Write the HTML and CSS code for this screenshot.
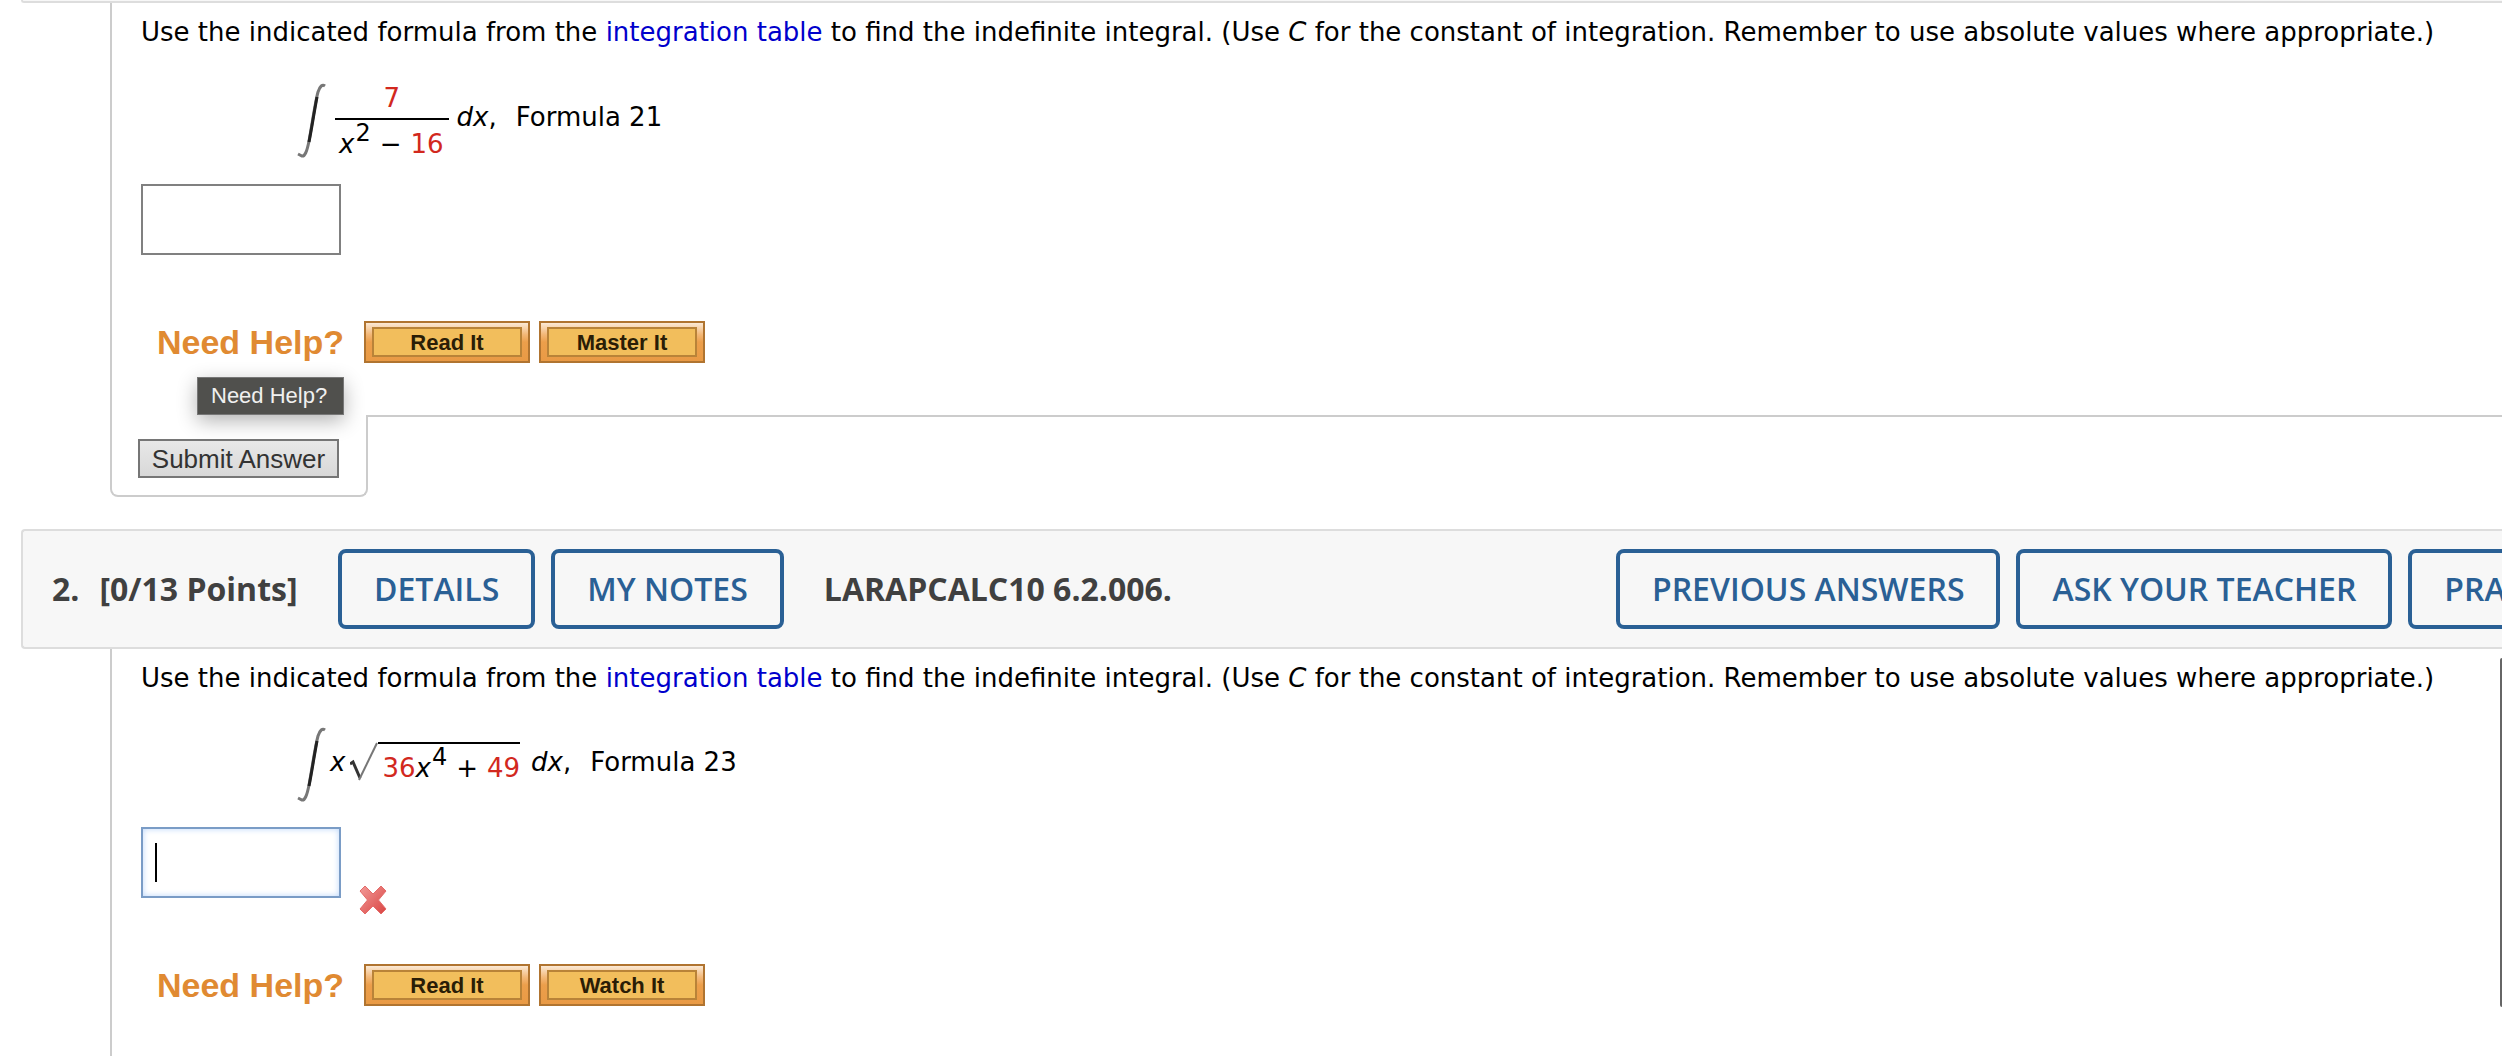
FILE: index.html
```html
<!DOCTYPE html>
<html lang="en">
<head>
<meta charset="utf-8">
<title>Integration homework</title>
<link rel="stylesheet" href="styles.css">
</head>
<body>
<main class="page">
  <div class="bar-end"></div>
  <section class="question">
    <div class="body first">
      <p class="prompt">Use the indicated formula from the <a href="#table">integration table</a> to find the indefinite integral. (Use <i>C</i> for the constant of integration. Remember to use absolute values where appropriate.)</p>
      <div class="math">
        <svg class="integral" viewBox="0 0 30 75" aria-label="integral"><path d="M28 3Q24 0 21 9C18 20 15 42 12 58Q9 74 5 73L1 71" fill="none" stroke="#777" stroke-width="3"/><path d="M20 14C17 30 15 44 12 59" fill="none" stroke="#222" stroke-width="3"/></svg>
        <span class="fraction"><span class="num red">7</span><span class="den"><i>x</i><sup>2</sup><span class="op">−</span><span class="red">16</span></span></span>
        <span class="term"><i>dx</i>,</span><span class="term formula">Formula 21</span>
      </div>
      <div class="answer-row"><input class="answer" type="text" aria-label="Answer to question 1"></div>
      <div class="help">
        <span class="help-title">Need Help?</span>
        <button class="help-btn" type="button"><span>Read It</span></button>
        <button class="help-btn" type="button"><span>Master It</span></button>
        <span class="tooltip" role="tooltip">Need Help?</span>
      </div>
    </div>
    <div class="foot">
      <div class="submit-tab"><button class="submit" type="button">Submit Answer</button></div>
      <div class="foot-line"></div>
    </div>
  </section>

  <header class="bar">
    <h2 class="points"><span>2.</span><span>[0/13 Points]</span></h2>
    <button class="action" type="button">DETAILS</button>
    <button class="action" type="button">MY NOTES</button>
    <strong class="code">LARAPCALC10 6.2.006.</strong>
    <div class="actions">
      <button class="action" type="button">PREVIOUS ANSWERS</button>
      <button class="action" type="button">ASK YOUR TEACHER</button>
      <button class="action" type="button">PRACTICE ANOTHER</button>
    </div>
  </header>
  <section class="question">
    <div class="body">
      <p class="prompt">Use the indicated formula from the <a href="#table">integration table</a> to find the indefinite integral. (Use <i>C</i> for the constant of integration. Remember to use absolute values where appropriate.)</p>
      <div class="math">
        <svg class="integral" viewBox="0 0 30 75" aria-label="integral"><path d="M28 3Q24 0 21 9C18 20 15 42 12 58Q9 74 5 73L1 71" fill="none" stroke="#777" stroke-width="3"/><path d="M20 14C17 30 15 44 12 59" fill="none" stroke="#222" stroke-width="3"/></svg>
        <span class="term factor"><i>x</i></span>
        <svg class="radical" viewBox="0 0 28 40" aria-label="square root"><path d="M0 22L3 20L10 36" fill="none" stroke="#333" stroke-width="3"/><path d="M9 38L27 1" fill="none" stroke="#777" stroke-width="2"/></svg>
        <span class="radicand"><span class="red">36</span><i>x</i><sup>4</sup><span class="op">+</span><span class="red">49</span></span>
        <span class="term after-root"><i>dx</i>,</span><span class="term formula">Formula 23</span>
      </div>
      <div class="answer-row">
        <input class="answer active" type="text" aria-label="Answer to question 2">
        <svg class="wrong" viewBox="0 0 28 30" aria-label="Incorrect"><defs><linearGradient id="g" x1="0" y1="0" x2="1" y2="1"><stop offset="0" stop-color="#f29a98"/><stop offset="1" stop-color="#d94442"/></linearGradient></defs><path d="M6 1L14 9L22 1L27 6L19.500 15L27 24L22 29L14 21L6 29L1 24L8.500 15L1 6Z" fill="url(#g)" stroke="#e46a68" stroke-width="1" stroke-linejoin="round"/></svg>
      </div>
      <div class="help">
        <span class="help-title">Need Help?</span>
        <button class="help-btn" type="button"><span>Read It</span></button>
        <button class="help-btn" type="button"><span>Watch It</span></button>
      </div>
    </div>
  </section>
  <div class="scroll-thumb"></div>
</main>
</body>
</html>
```
FILE: styles.css
```css
* { box-sizing: border-box; }
html, body { height: 100%; }
body {
  margin: 0;
  overflow: hidden;
  background: #fff;
  color: #000;
  font: 26px/30px "DejaVu Sans", sans-serif;
}
button { font: inherit; margin: 0; flex: none; white-space: nowrap; }
.page {
  position: relative;
  display: flex;
  flex-direction: column;
  min-height: 100%;
}
.bar-end {
  height: 3px;
  margin-left: 21px;
  background: #f7f7f7;
  border: 2px solid #ddd;
  border-width: 0 0 2px 2px;
  border-bottom-left-radius: 4px;
}
.question:last-of-type { flex: 1; display: flex; }
.body {
  flex: 1;
  margin-left: 110px;
  padding: 14px 0 52px 29px;
  border-left: 2px solid #ccc;
}
.prompt { margin: 0 0 34px; white-space: nowrap; }
.first .prompt { margin-bottom: 36px; }
.prompt a { color: #00c; text-decoration: none; }
.red { color: #d2281e; }

.math {
  display: flex;
  align-items: flex-start;
  height: 76px;
  margin: 0 0 24px 156px;
  white-space: nowrap;
}
.first .math { margin-bottom: 25px; }
.integral { width: 30px; height: 75px; flex: none; }
.fraction { display: flex; flex-direction: column; margin: 0 8px; }
.num { text-align: center; padding-bottom: 5px; border-bottom: 2px solid #000; }
.den { padding: 9px 5px 0 4px; }
sup { font-size: 24px; line-height: 0; vertical-align: 12px; margin-left: 1px; }
.op { margin: 0 9px; }
.term { padding-top: 20px; }
.first .term { padding-top: 19px; }
.factor { margin-left: 3px; }
.formula { margin-left: 19px; }
.radical { width: 28px; height: 40px; margin: 15px 0 0 5px; flex: none; }
.radicand { margin-top: 15px; padding: 9px 0 0 4px; border-top: 2px solid #000; }
.after-root { margin-left: 11px; }

.answer-row { display: flex; align-items: flex-end; height: 71px; }
.answer {
  width: 200px;
  height: 71px;
  padding: 0 12px;
  border: 2px solid #808080;
  border-radius: 0;
  background: #fff;
  font: inherit;
  outline: none;
}
.active {
  border-color: #7a9cc6;
  background: linear-gradient(#000, #000) 12px 14px / 2px 39px no-repeat #fff;
  box-shadow: inset 0 0 6px #bcd6fa;
}
.wrong { width: 28px; height: 30px; margin: 0 0 -17px 18px; }

.help {
  position: relative;
  display: flex;
  align-items: center;
  gap: 9px;
  margin: 66px 0 0 16px;
  font-family: "Liberation Sans", Arial, sans-serif;
}
.help-title { width: 198px; font-size: 34px; font-weight: bold; color: #e08a32; white-space: nowrap; }
.help-btn {
  width: 166px;
  height: 42px;
  padding: 4px 6px;
  border: 2px solid #b07430;
  background: linear-gradient(#fbe9d5, #f3b878 30%, #ec9f4b 50%, #e99a45);
  color: #2a1d06;
  font-size: 22px;
  font-weight: bold;
}
.help-btn span {
  display: block;
  height: 30px;
  border: 2px solid #b98338;
  background: #f2be5c;
  line-height: 28px;
}
.tooltip {
  position: absolute;
  left: 40px;
  top: 56px;
  height: 38px;
  padding: 0 16px 0 13px;
  border: 1px solid #777;
  background: #50504d;
  box-shadow: 0 6px 20px rgba(0, 0, 0, .3);
  color: #f0f0f0;
  font-size: 22px;
  line-height: 36px;
}

.foot { display: flex; margin: 0 0 32px 110px; }
.submit-tab {
  width: 258px;
  height: 82px;
  padding: 24px 0 0 26px;
  border: 2px solid #ccc;
  border-top: 0;
  border-radius: 0 0 8px 8px;
}
.foot-line { flex: 1; border-top: 2px solid #ccc; margin-left: -2px; }
.submit {
  width: 201px;
  height: 39px;
  padding: 0;
  border: 2px solid #767676;
  background: linear-gradient(#e8e8e8, #d8d8d8);
  color: #333;
  font: 26px/34px "Liberation Sans", Arial, sans-serif;
}

.bar {
  display: flex;
  align-items: center;
  height: 120px;
  margin-left: 21px;
  padding-left: 29px;
  border: 2px solid #ddd;
  border-right: 0;
  border-radius: 4px 0 0 4px;
  background: #f7f7f7;
  color: #404040;
  font: bold 32px/40px "Open Sans", sans-serif;
  white-space: nowrap;
}
.points { display: flex; gap: 20px; width: 286px; margin: 0; font: inherit; }
.action {
  height: 80px;
  margin-right: 16px;
  padding: 0 32px;
  border: 4px solid #2a6095;
  border-radius: 8px;
  background: #f7f7f7;
  color: #2a6095;
  font-weight: 600;
}
.code { margin-left: 24px; font-weight: bold; }
.actions { display: flex; width: 886px; margin-left: auto; overflow: hidden; }
.scroll-thumb {
  position: absolute;
  right: 0;
  top: 658px;
  width: 2px;
  height: 349px;
  border-radius: 2px 0 0 2px;
  background: #666;
}
```
